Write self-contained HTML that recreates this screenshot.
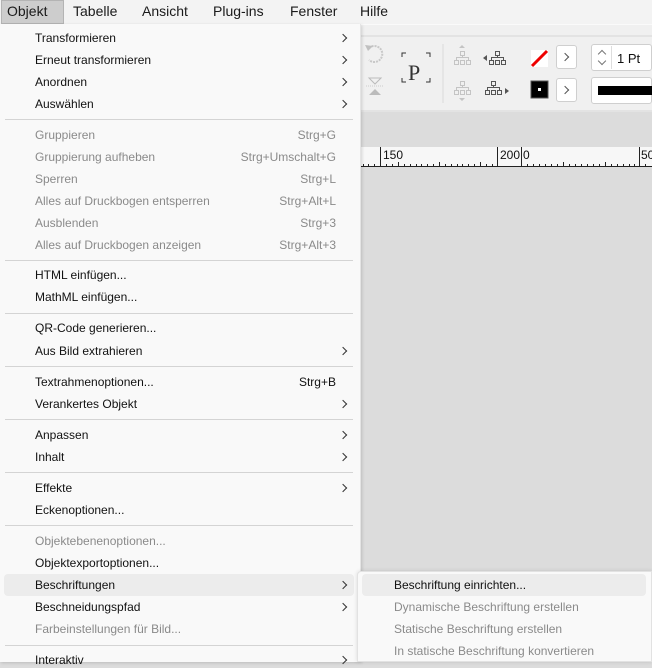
<!DOCTYPE html>
<html><head><meta charset="utf-8"><style>
*{margin:0;padding:0;box-sizing:border-box}
body{width:652px;height:662px;overflow:hidden;background:#dcdcdc;font-family:"Segoe UI","Liberation Sans",sans-serif;position:relative}
.abs{position:absolute}
#bar{left:0;top:0;width:652px;height:24px;background:#f3f3f3;font-size:14px;color:#1a1a1a}
#bar span{position:absolute;top:3px}
#objbtn{left:1px;top:0;width:63px;height:24px;background:#cdcdcd;border:1px solid #b4b4b4}
#tb{left:0;top:24px;width:652px;height:87px;background:#f0f0f0;border-top:1px solid #fafafa}
#tbline{left:0;top:35px;width:652px;height:2px;background:#e3e3e3}
#tbbot{left:0;top:110px;width:652px;height:2px;background:#e3e3e3}
#ruler{left:361px;top:147px;width:291px;height:20px;background:#f7f7f7;border-bottom:1px solid #222;font-size:12px;color:#111}
#menu{left:0;top:24px;width:361px;height:638px;background:#f9f9f9;border-right:1px solid #e4e4e4;box-shadow:1px 1px 3px rgba(0,0,0,.15)}
.it{position:absolute;left:35px;font-size:12px;color:#111;line-height:16px;white-space:nowrap}
.d{color:#8a8a8a}
.ar{position:absolute;left:337px;width:12px;height:16px}
.ar::after{content:"";position:absolute;left:3px;top:5px;width:5px;height:5px;border-right:1px solid #333;border-top:1px solid #333;transform:rotate(45deg)}
.sc{position:absolute;left:200px;width:136px;text-align:right;font-size:12px;color:#8a8a8a;line-height:16px}
.sep{position:absolute;left:5px;width:348px;height:1px;background:#d4d4d4}
#hl{left:4px;top:574px;width:350px;height:22px;background:#ececec;border-radius:4px}
#sub{left:357px;top:571px;width:295px;height:91px;background:#f9f9f9;border:1px solid #e2e2e2;border-radius:4px 0 0 0;box-shadow:0 0 4px rgba(0,0,0,.12)}
#subhl{left:362px;top:574px;width:284px;height:22px;background:#ececec;border-radius:4px}
.si{position:absolute;left:394px;font-size:12px;line-height:16px;white-space:nowrap}
.box{position:absolute;background:#fff;border:1px solid #cfcfcf;border-radius:3px}
.chev{position:absolute;width:6px;height:6px;border-right:1px solid #555;border-top:1px solid #555;transform:rotate(45deg)}
</style></head><body>
<div id="bar" class="abs">
<div id="objbtn" class="abs"></div>
<span style="left:7px">Objekt</span><span style="left:73px">Tabelle</span><span style="left:142px">Ansicht</span><span style="left:213px">Plug-ins</span><span style="left:290px">Fenster</span><span style="left:360px">Hilfe</span>
</div>
<div id="tb" class="abs"></div>
<div id="tbline" class="abs"></div>
<div id="tbbot" class="abs"></div>
<svg class="abs" style="left:361px;top:37px" width="291" height="73">
<path d="M8 11 A8 8 0 1 1 8 23" fill="none" stroke="#c8c8c8" stroke-width="2" stroke-dasharray="2 1"/><path d="M4 8 l3 6 l5 -5z" fill="#c0c0c0"/>
<path d="M8 41 h12 l-6 6z" fill="none" stroke="#bbb"/><line x1="5" y1="49" x2="23" y2="49" stroke="#ccc" stroke-dasharray="1 1"/><path d="M8 58 h12 l-6 -6z" fill="#bbb"/>
<path d="M41 20v-4h4 M65 16h4v4 M41 41v4h4 M65 45h4v-4" fill="none" stroke="#333"/>
<text x="47" y="43" font-family="Liberation Serif,serif" font-size="22" fill="#333">P</text>
<line x1="82" y1="7" x2="82" y2="66" stroke="#dadada"/>
<g fill="none" stroke="#c4c4c4"><rect x="99.5" y="14.5" width="4" height="4"/><path d="M101.5 18.5v2M95.5 23.5v-3h12v3"/><rect x="93.5" y="23.5" width="4" height="4"/><rect x="99.5" y="23.5" width="4" height="4"/><rect x="105.5" y="23.5" width="4" height="4"/><rect x="99.5" y="44.5" width="4" height="4"/><path d="M101.5 48.5v2M95.5 53.5v-3h12v3"/><rect x="93.5" y="53.5" width="4" height="4"/><rect x="99.5" y="53.5" width="4" height="4"/><rect x="105.5" y="53.5" width="4" height="4"/></g>
<path d="M98 11l3-3 3 3z M98 61l3 3 3-3z" fill="#c4c4c4"/>
<g fill="none" stroke="#555"><rect x="134.5" y="14.5" width="4" height="4"/><path d="M136.5 18.5v2M130.5 23.5v-3h12v3"/><rect x="128.5" y="23.5" width="4" height="4"/><rect x="134.5" y="23.5" width="4" height="4"/><rect x="140.5" y="23.5" width="4" height="4"/><rect x="130.5" y="44.5" width="4" height="4"/><path d="M132.5 48.5v2M126.5 53.5v-3h12v3"/><rect x="124.5" y="53.5" width="4" height="4"/><rect x="130.5" y="53.5" width="4" height="4"/><rect x="136.5" y="53.5" width="4" height="4"/></g>
<path d="M126 18l-4 3 4 3z M144 51l4 3-4 3z" fill="#555"/>
<rect x="170" y="13" width="17" height="17" fill="#fff"/><line x1="171" y1="29" x2="186" y2="14" stroke="#e00" stroke-width="3"/>
<rect x="170" y="44" width="17" height="17" fill="#000" stroke="#555"/><rect x="177" y="51" width="3" height="3" fill="#fff"/>
</svg>
<div class="box" style="left:556px;top:45px;width:21px;height:24px"><div class="chev" style="left:5px;top:8px"></div></div>
<div class="box" style="left:556px;top:78px;width:21px;height:24px"><div class="chev" style="left:5px;top:8px"></div></div>
<div class="box" style="left:591px;top:44px;width:61px;height:27px"></div>
<div class="abs" style="left:593px;top:46px;width:19px;height:23px;border-right:1px solid #ddd"></div>
<div class="chev" style="left:599px;top:51px;transform:rotate(-45deg);border-color:#777"></div>
<div class="chev" style="left:599px;top:58px;transform:rotate(135deg);border-color:#777"></div>
<div class="abs" style="left:617px;top:51px;font-size:13px;color:#111">1 Pt</div>
<div class="box" style="left:591px;top:77px;width:61px;height:27px"></div>
<div class="abs" style="left:598px;top:86px;width:54px;height:9px;background:#000"></div>
<div id="ruler" class="abs">
<svg class="abs" style="left:0;top:0" width="291" height="20"><g stroke="#222">
<line x1="19.5" y1="0" x2="19.5" y2="20"/><line x1="136.5" y1="0" x2="136.5" y2="20"/><line x1="160.5" y1="0" x2="160.5" y2="20"/><line x1="278.5" y1="0" x2="278.5" y2="20"/>
<path d="M2.5 20v-3M7.5 20v-3M13.5 20v-3M25.5 20v-3M31.5 20v-3M37.5 20v-5M43.5 20v-3M49.5 20v-3M55.5 20v-3M60.5 20v-3M66.5 20v-3M72.5 20v-3M78.5 20v-5M84.5 20v-3M90.5 20v-3M96.5 20v-3M101.5 20v-3M107.5 20v-3M113.5 20v-3M119.5 20v-5M125.5 20v-3M131.5 20v-3M166.5 20v-3M172.5 20v-3M178.5 20v-3M184.5 20v-3M190.5 20v-3M196.5 20v-3M202.5 20v-5M208.5 20v-3M214.5 20v-3M220.5 20v-3M226.5 20v-3M232.5 20v-3M238.5 20v-3M244.5 20v-5M250.5 20v-3M256.5 20v-3M262.5 20v-3M268.5 20v-3M273.5 20v-3M284.5 20v-3"/></g></svg>
<span class="abs" style="left:22px;top:1px">150</span><span class="abs" style="left:139px;top:1px">200</span><span class="abs" style="left:162px;top:1px">0</span><span class="abs" style="left:280px;top:1px">50</span>
</div>
<div id="menu" class="abs"></div>
<div id="hl" class="abs"></div>
<div class="it" style="top:30px">Transformieren</div><div class="ar" style="top:30px"></div>
<div class="it" style="top:52px">Erneut transformieren</div><div class="ar" style="top:52px"></div>
<div class="it" style="top:74px">Anordnen</div><div class="ar" style="top:74px"></div>
<div class="it" style="top:96px">Auswählen</div><div class="ar" style="top:96px"></div>
<div class="sep" style="top:119px"></div>
<div class="it d" style="top:127px">Gruppieren</div><div class="sc" style="top:127px">Strg+G</div>
<div class="it d" style="top:149px">Gruppierung aufheben</div><div class="sc" style="top:149px">Strg+Umschalt+G</div>
<div class="it d" style="top:171px">Sperren</div><div class="sc" style="top:171px">Strg+L</div>
<div class="it d" style="top:193px">Alles auf Druckbogen entsperren</div><div class="sc" style="top:193px">Strg+Alt+L</div>
<div class="it d" style="top:215px">Ausblenden</div><div class="sc" style="top:215px">Strg+3</div>
<div class="it d" style="top:237px">Alles auf Druckbogen anzeigen</div><div class="sc" style="top:237px">Strg+Alt+3</div>
<div class="sep" style="top:260px"></div>
<div class="it" style="top:267px">HTML einfügen...</div>
<div class="it" style="top:289px">MathML einfügen...</div>
<div class="sep" style="top:313px"></div>
<div class="it" style="top:320px">QR-Code generieren...</div>
<div class="it" style="top:343px">Aus Bild extrahieren</div><div class="ar" style="top:343px"></div>
<div class="sep" style="top:366px"></div>
<div class="it" style="top:374px">Textrahmenoptionen...</div><div class="sc" style="top:374px;color:#111">Strg+B</div>
<div class="it" style="top:396px">Verankertes Objekt</div><div class="ar" style="top:396px"></div>
<div class="sep" style="top:419px"></div>
<div class="it" style="top:427px">Anpassen</div><div class="ar" style="top:427px"></div>
<div class="it" style="top:449px">Inhalt</div><div class="ar" style="top:449px"></div>
<div class="sep" style="top:472px"></div>
<div class="it" style="top:480px">Effekte</div><div class="ar" style="top:480px"></div>
<div class="it" style="top:502px">Eckenoptionen...</div>
<div class="sep" style="top:525px"></div>
<div class="it d" style="top:533px">Objektebenenoptionen...</div>
<div class="it" style="top:555px">Objektexportoptionen...</div>
<div class="it" style="top:577px">Beschriftungen</div><div class="ar" style="top:577px"></div>
<div class="it" style="top:599px">Beschneidungspfad</div><div class="ar" style="top:599px"></div>
<div class="it d" style="top:621px">Farbeinstellungen für Bild...</div>
<div class="sep" style="top:645px"></div>
<div class="it" style="top:652px">Interaktiv</div><div class="ar" style="top:652px"></div>
<div id="sub" class="abs"></div>
<div id="subhl" class="abs"></div>
<div class="si" style="top:577px;color:#111">Beschriftung einrichten...</div>
<div class="si" style="top:599px;color:#8a8a8a">Dynamische Beschriftung erstellen</div>
<div class="si" style="top:621px;color:#8a8a8a">Statische Beschriftung erstellen</div>
<div class="si" style="top:643px;color:#8a8a8a">In statische Beschriftung konvertieren</div>
</body></html>
